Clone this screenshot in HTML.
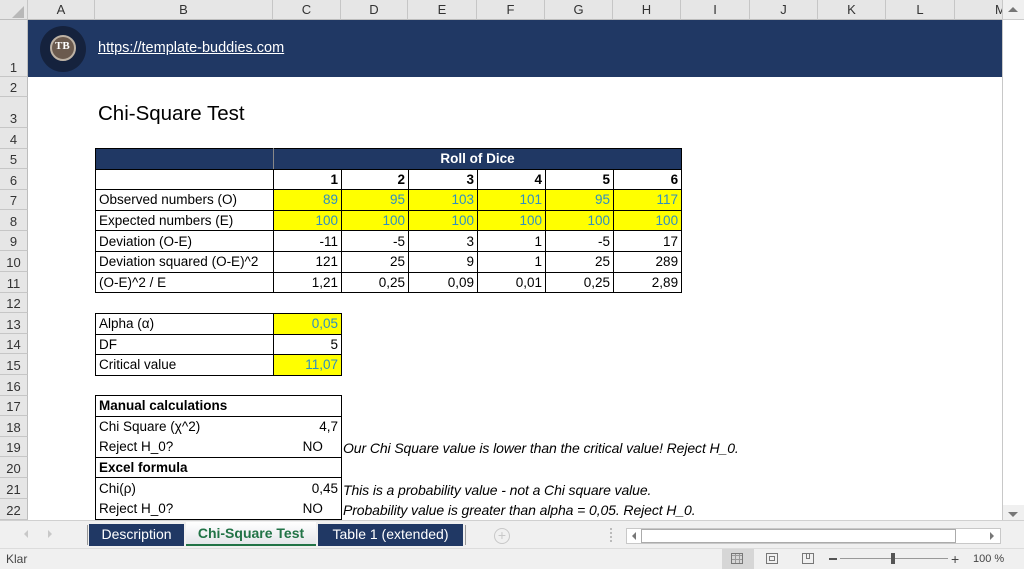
<!DOCTYPE html>
<html><head><meta charset="utf-8"><style>
*{margin:0;padding:0;box-sizing:border-box}
body{width:1024px;height:569px;overflow:hidden;background:#fff;font-family:"Liberation Sans",sans-serif;position:relative;font-size:13px;color:#000}
.a{position:absolute}
.ch{position:absolute;top:0;height:20px;background:#e6e6e6;border-right:1px solid #c6c6c6;border-bottom:1px solid #bdbdbd;text-align:center;font-size:13px;line-height:20px;color:#333}
.rh{position:absolute;left:0;width:28px;background:#e6e6e6;border-right:1px solid #bdbdbd;border-bottom:1px solid #c6c6c6;text-align:center;font-size:13px;color:#333;display:flex;align-items:flex-end;justify-content:center;padding-bottom:1px}
table{position:absolute;border-collapse:collapse;table-layout:fixed}
td{border:1px solid #000;height:20.6px;padding:1px 3px 0;font-size:13.5px;line-height:18px;white-space:nowrap;overflow:hidden;letter-spacing:0}
td.r{text-align:right}
td.y{background:#ffff00;color:#2f8fc0}
td.b{font-weight:bold}
.it{position:absolute;left:343px;font-style:italic;font-size:14px;letter-spacing:-0.1px;white-space:nowrap}
</style></head><body>
<div class="ch" style="left:0;width:28px"></div>
<div class="a" style="left:12px;top:6px;width:0;height:0;border-left:12px solid transparent;border-bottom:12px solid #b8b8b8"></div>
<div class="ch" style="left:28px;width:67px">A</div>
<div class="ch" style="left:95px;width:178px">B</div>
<div class="ch" style="left:273px;width:68px">C</div>
<div class="ch" style="left:341px;width:67px">D</div>
<div class="ch" style="left:408px;width:69px">E</div>
<div class="ch" style="left:477px;width:68px">F</div>
<div class="ch" style="left:545px;width:68px">G</div>
<div class="ch" style="left:613px;width:68px">H</div>
<div class="ch" style="left:681px;width:69px">I</div>
<div class="ch" style="left:750px;width:68px">J</div>
<div class="ch" style="left:818px;width:68px">K</div>
<div class="ch" style="left:886px;width:69px">L</div>
<div class="ch" style="left:955px;width:48px;text-align:left;padding-left:40px;overflow:hidden">M</div>
<div class="rh" style="top:20px;height:57px">1</div>
<div class="rh" style="top:77px;height:20px">2</div>
<div class="rh" style="top:97px;height:31px">3</div>
<div class="rh" style="top:128px;height:21px">4</div>
<div class="rh" style="top:149px;height:20px">5</div>
<div class="rh" style="top:169px;height:21px">6</div>
<div class="rh" style="top:190px;height:20px">7</div>
<div class="rh" style="top:210px;height:21px">8</div>
<div class="rh" style="top:231px;height:20px">9</div>
<div class="rh" style="top:251px;height:21px">10</div>
<div class="rh" style="top:272px;height:21px">11</div>
<div class="rh" style="top:293px;height:20px">12</div>
<div class="rh" style="top:313px;height:21px">13</div>
<div class="rh" style="top:334px;height:20px">14</div>
<div class="rh" style="top:354px;height:21px">15</div>
<div class="rh" style="top:375px;height:21px">16</div>
<div class="rh" style="top:396px;height:20px">17</div>
<div class="rh" style="top:416px;height:21px">18</div>
<div class="rh" style="top:437px;height:20px">19</div>
<div class="rh" style="top:457px;height:21px">20</div>
<div class="rh" style="top:478px;height:21px">21</div>
<div class="rh" style="top:499px;height:21px">22</div>
<div class="a" style="left:28px;top:20px;width:975px;height:57px;background:#203864"></div>
<div class="a" style="left:40px;top:26px;width:46px;height:46px;border-radius:50%;background:#15223d"></div>
<div class="a" style="left:50px;top:35px;width:26px;height:26px;border-radius:50%;background:#6b5a4e;border:2px solid #bdb2a5"></div>
<div class="a" style="left:55px;top:40px;font-size:11px;font-weight:bold;color:#fff;font-family:'Liberation Serif',serif">TB</div>
<div class="a" style="left:98px;top:40px;color:#fff;text-decoration:underline;font-size:14.5px">https://template-buddies.com</div>
<div class="a" style="left:98px;top:102px;font-size:20.5px">Chi-Square Test</div>
<table style="left:95px;top:148px;width:586px">
<colgroup><col style="width:178px"><col style="width:68px"><col style="width:67px"><col style="width:69px"><col style="width:68px"><col style="width:68px"><col style="width:68px"></colgroup>
<tr><td style="background:#203864;border-right:1px solid #888"></td><td colspan="6" style="background:#203864;color:#fff;font-weight:bold;text-align:center">Roll of Dice</td></tr>
<tr><td></td><td class="r b">1</td><td class="r b">2</td><td class="r b">3</td><td class="r b">4</td><td class="r b">5</td><td class="r b">6</td></tr>
<tr><td>Observed numbers (O)</td><td class="r y">89</td><td class="r y">95</td><td class="r y">103</td><td class="r y">101</td><td class="r y">95</td><td class="r y">117</td></tr>
<tr><td>Expected numbers (E)</td><td class="r y">100</td><td class="r y">100</td><td class="r y">100</td><td class="r y">100</td><td class="r y">100</td><td class="r y">100</td></tr>
<tr><td>Deviation (O-E)</td><td class="r">-11</td><td class="r">-5</td><td class="r">3</td><td class="r">1</td><td class="r">-5</td><td class="r">17</td></tr>
<tr><td>Deviation squared (O-E)^2</td><td class="r">121</td><td class="r">25</td><td class="r">9</td><td class="r">1</td><td class="r">25</td><td class="r">289</td></tr>
<tr><td>(O-E)^2 / E</td><td class="r">1,21</td><td class="r">0,25</td><td class="r">0,09</td><td class="r">0,01</td><td class="r">0,25</td><td class="r">2,89</td></tr>
</table>
<table style="left:95px;top:313px;width:246px">
<colgroup><col style="width:178px"><col style="width:68px"></colgroup>
<tr><td>Alpha (α)</td><td class="r y">0,05</td></tr>
<tr><td>DF</td><td class="r">5</td></tr>
<tr><td>Critical value</td><td class="r y">11,07</td></tr>
</table>
<table style="left:95px;top:395px;width:246px">
<colgroup><col style="width:178px"><col style="width:68px"></colgroup>
<tr><td colspan="2" class="b">Manual calculations</td></tr>
<tr><td style="border-right:none;border-bottom:none">Chi Square (χ^2)</td><td class="r" style="border-left:none;border-bottom:none">4,7</td></tr>
<tr><td style="border-right:none;border-top:none">Reject H_0?</td><td style="border-left:none;border-top:none;text-align:center;padding-left:14px">NO</td></tr>
<tr><td colspan="2" class="b">Excel formula</td></tr>
<tr><td style="border-right:none;border-bottom:none">Chi(ρ)</td><td class="r" style="border-left:none;border-bottom:none">0,45</td></tr>
<tr><td style="border-right:none;border-top:none">Reject H_0?</td><td style="border-left:none;border-top:none;text-align:center;padding-left:14px">NO</td></tr>
</table>
<div class="it" style="top:440px">Our Chi Square value is lower than the critical value! Reject H_0.</div>
<div class="it" style="top:482px">This is a probability value - not a Chi square value.</div>
<div class="it" style="top:502px">Probability value is greater than alpha = 0,05. Reject H_0.</div>
<div class="a" style="left:1002px;top:0;width:22px;height:522px;background:#fff;border-left:1px solid #c8c8c8"></div>
<div class="a" style="left:1003px;top:0;width:21px;height:20px;background:#f0f0f0;border-bottom:1px solid #ccc"></div>
<div class="a" style="left:1008px;top:7px;border-left:5px solid transparent;border-right:5px solid transparent;border-bottom:5px solid #777"></div>
<div class="a" style="left:1003px;top:505px;width:21px;height:17px;background:#f0f0f0"></div>
<div class="a" style="left:1008px;top:512px;border-left:5px solid transparent;border-right:5px solid transparent;border-top:5px solid #777"></div>
<div class="a" style="left:0;top:520px;width:1024px;height:28px;background:#f0f0f0;border-top:1px solid #d0d0d0"></div>
<div class="a" style="left:24px;top:530px;border-top:4px solid transparent;border-bottom:4px solid transparent;border-right:4px solid #c8c8c8"></div>
<div class="a" style="left:48px;top:530px;border-top:4px solid transparent;border-bottom:4px solid transparent;border-left:4px solid #c8c8c8"></div>
<div class="a" style="left:87px;top:525px;width:1px;height:20px;background:#999"></div>
<div class="a" style="left:89px;top:524px;width:95px;height:22px;background:#203864;color:#fff;text-align:center;line-height:20px;font-size:14px">Description</div>
<div class="a" style="left:186px;top:522px;width:130px;height:24px;background:linear-gradient(#fff,#e4e6ea);color:#217346;font-weight:bold;text-align:center;line-height:22px;font-size:14px;border-bottom:2px solid #217346">Chi-Square Test</div>
<div class="a" style="left:318px;top:524px;width:145px;height:22px;background:#203864;color:#fff;text-align:center;line-height:20px;font-size:14px">Table 1 (extended)</div>
<div class="a" style="left:465px;top:525px;width:1px;height:20px;background:#999"></div>
<div class="a" style="left:494px;top:528px;width:16px;height:16px;border:1px solid #c8c8c8;border-radius:50%;color:#c8c8c8;font-size:14px;line-height:13px;text-align:center">+</div>
<div class="a" style="left:610px;top:528px;width:2px;height:14px;border-left:2px dotted #bbb"></div>
<div class="a" style="left:626px;top:528px;width:375px;height:16px;background:#fff;border:1px solid #c8c8c8"></div>
<div class="a" style="left:632px;top:532px;border-top:4px solid transparent;border-bottom:4px solid transparent;border-right:4px solid #777"></div>
<div class="a" style="left:641px;top:529px;width:315px;height:14px;border:1px solid #ababab;background:#fff"></div>
<div class="a" style="left:990px;top:532px;border-top:4px solid transparent;border-bottom:4px solid transparent;border-left:4px solid #777"></div>
<div class="a" style="left:0;top:548px;width:1024px;height:21px;background:#f0f0f0;border-top:1px solid #dcdcdc"></div>
<div class="a" style="left:6px;top:552px;font-size:12px;color:#444">Klar</div>
<div class="a" style="left:722px;top:549px;width:32px;height:20px;background:#d6d6d6"></div>
<div class="a" style="left:731px;top:553px;width:12px;height:11px;border:1px solid #777;background:repeating-linear-gradient(90deg,transparent 0 3px,#999 3px 4px),repeating-linear-gradient(0deg,transparent 0 3px,#999 3px 4px)"></div>
<div class="a" style="left:766px;top:553px;width:12px;height:11px;border:1px solid #777"><div style="margin:2px;width:6px;height:5px;border:1px solid #777"></div></div>
<div class="a" style="left:802px;top:553px;width:12px;height:11px;border:1px solid #777"><div style="margin:0 3px;width:4px;height:5px;border:1px solid #777;border-top:none"></div></div>
<div class="a" style="left:829px;top:558px;width:8px;height:2px;background:#555"></div>
<div class="a" style="left:840px;top:558px;width:108px;height:1px;background:#999"></div>
<div class="a" style="left:891px;top:553px;width:4px;height:11px;background:#555"></div>
<div class="a" style="left:951px;top:553px;font-size:14px;line-height:12px;color:#444">+</div>
<div class="a" style="left:973px;top:553px;font-size:11px;color:#444">100 %</div>
</body></html>
